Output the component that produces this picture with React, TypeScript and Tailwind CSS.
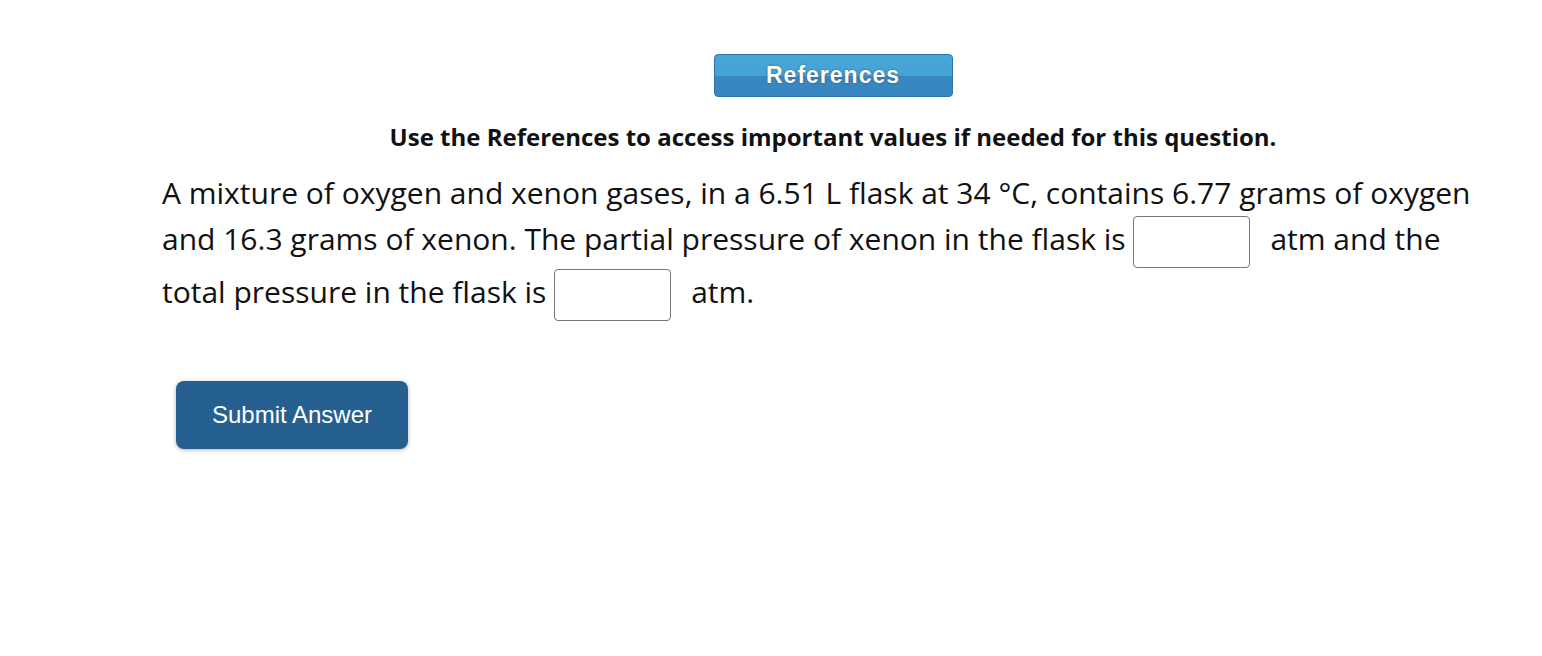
export default function App() {
  return (
    <div className="min-h-screen w-full bg-white font-['Open_Sans',sans-serif] text-[#111]">
      <div className="ml-[162px] w-[1342px] pt-[54px]">
        <div className="flex justify-center">
          <button className="h-[43px] w-[239px] rounded-[4px] border border-[#2f74a8] bg-[linear-gradient(#47a7d9_0%,#45a2d5_50%,#3a88c2_51%,#3886c1_100%)] font-['Liberation_Sans',sans-serif] text-[23px] font-bold tracking-[1px] text-white [text-shadow:0_0_2px_rgba(0,0,0,0.5)]">
            References
          </button>
        </div>
        <p className="mt-[22px] text-center text-[24px] font-bold text-[#111]">
          Use the References to access important values if needed for this question.
        </p>
        <p className="mt-[16px] pr-[22px] text-[30px] leading-[44px] text-[#111]">
          A mixture of oxygen and xenon gases, in a 6.51 L flask at 34 °C, contains 6.77 grams of oxygen and 16.3
          grams of xenon. The partial pressure of xenon in the flask is{' '}
          <input
            type="text"
            className="my-[1px] h-[52px] w-[117px] rounded-[4px] border border-[#767676] align-middle"
          />
          <span className="ml-[20px]">atm and the total pressure in the flask is </span>
          <input
            type="text"
            className="h-[52px] w-[117px] rounded-[4px] border border-[#767676] align-middle"
          />
          <span className="ml-[20px]">atm.</span>
        </p>
        <button className="ml-[14px] mt-[60px] h-[68px] w-[232px] rounded-[8px] bg-[#256090] font-['Liberation_Sans',sans-serif] text-[24px] text-white shadow-[0_1px_4px_rgba(0,0,0,0.3)]">
          Submit Answer
        </button>
      </div>
    </div>
  );
}
